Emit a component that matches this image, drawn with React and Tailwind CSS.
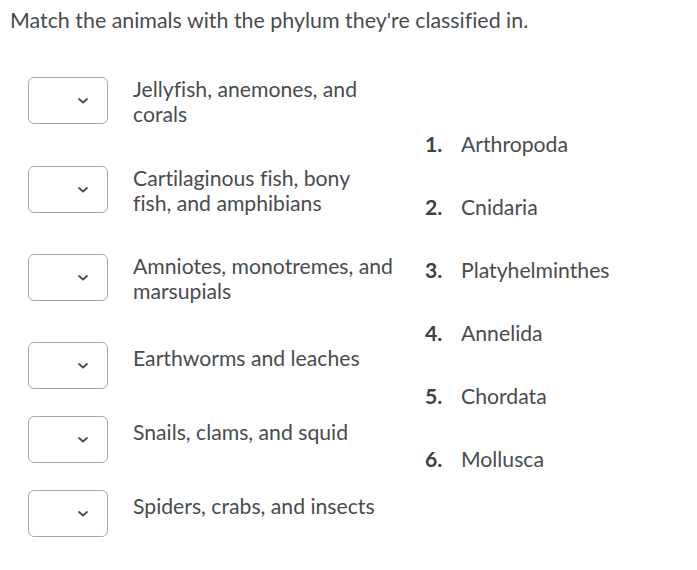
import React from 'react';

const rows = [
  { text: ['Jellyfish, anemones, and', 'corals'], h: 'h-[89px]', pad: 'pt-0' },
  { text: ['Cartilaginous fish, bony', 'fish, and amphibians'], h: 'h-[88px]', pad: 'pt-0' },
  { text: ['Amniotes, monotremes, and', 'marsupials'], h: 'h-[88px]', pad: 'pt-0' },
  { text: ['Earthworms and leaches'], h: 'h-[74px]', pad: 'pt-[4px]' },
  { text: ['Snails, clams, and squid'], h: 'h-[74px]', pad: 'pt-[4px]' },
  { text: ['Spiders, crabs, and insects'], h: 'h-[60px]', pad: 'pt-[4px]' },
];

const phyla = ['Arthropoda', 'Cnidaria', 'Platyhelminthes', 'Annelida', 'Chordata', 'Mollusca'];

function SelectBox() {
  return (
    <div className="w-[80px] h-[47px] shrink-0 rounded-[6px] border border-[#a8a8a8] bg-white flex items-center justify-end pr-[19px]">
      <svg width="10" height="6" viewBox="0 0 10 6" fill="none">
        <path d="M1 1l4 3.5L9 1" stroke="#494c4e" strokeWidth="1.8" strokeLinecap="round" strokeLinejoin="round" />
      </svg>
    </div>
  );
}

export default function App() {
  return (
    <div className="w-[697px] h-[570px] bg-white text-[#494c4e] font-['Lato','Liberation_Sans',sans-serif] [font-variant-ligatures:none]">
      <h1 className="pl-[10px] pt-[7px] text-[21.4px] leading-[26px] font-normal">
        Match the animals with the phylum they're classified in.
      </h1>
      <div className="flex mt-[44px]">
        <div className="pl-[28px] w-[425px] shrink-0">
          {rows.map((r, i) => (
            <div key={i} className={`flex items-start gap-[25px] ${r.h}`}>
              <SelectBox />
              <div className={`text-[21.2px] leading-[25px] whitespace-nowrap ${r.pad}`}>
                {r.text.map((t, j) => (
                  <div key={j}>{t}</div>
                ))}
              </div>
            </div>
          ))}
        </div>
        <div className="mt-[55px] flex flex-col gap-[38px]">
          {phyla.map((p, i) => (
            <div key={p} className="flex text-[21.2px] leading-[25px]">
              <span className="w-[36px] font-bold text-[#3e4143]">{i + 1}.</span>
              <span>{p}</span>
            </div>
          ))}
        </div>
      </div>
    </div>
  );
}
